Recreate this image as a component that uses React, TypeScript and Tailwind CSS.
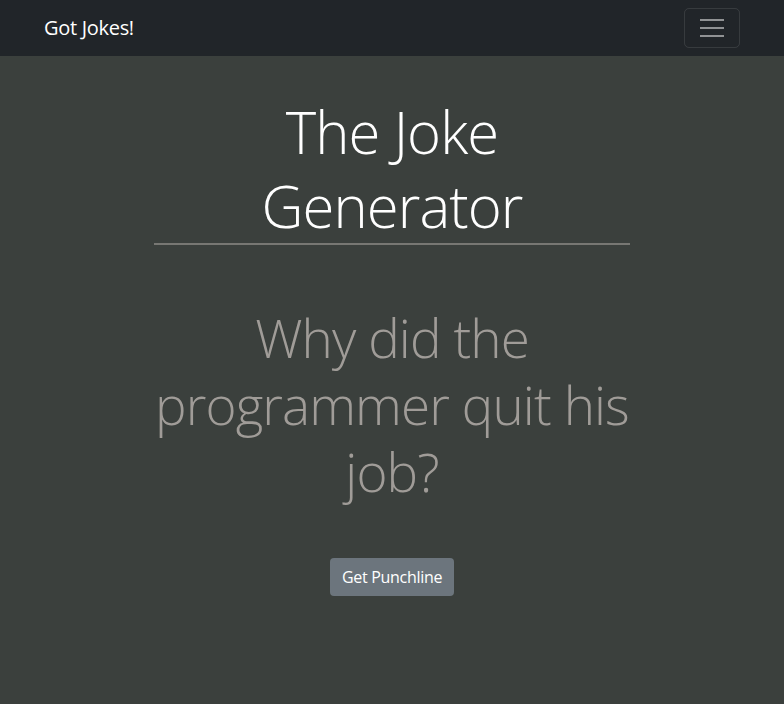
import React from "react";

const light = { fontFamily: '"Open Sans", "Noto Sans", sans-serif' };

export default function App() {
  return (
    <div className="min-h-[704px] bg-[#3b403d]" style={light}>
      <nav className="h-14 bg-[#212529] flex items-center justify-between pl-[44px] pr-[44px]">
        <span className="text-white text-[20px] leading-none tracking-[-0.3px]">Got Jokes!</span>
        <button className="w-14 h-10 rounded-[5px] border border-white/10 flex flex-col items-center justify-center gap-[6px]">
          <span className="block w-6 h-[2px] bg-white/50" />
          <span className="block w-6 h-[2px] bg-white/50" />
          <span className="block w-6 h-[2px] bg-white/50" />
        </button>
      </nav>
      <main className="flex flex-col items-center">
        <div className="w-[476px] mt-[39px]">
          <h1 className="text-center text-white font-light text-[58px] leading-[74px] tracking-[-0.9px]">
            The Joke Generator
          </h1>
          <hr className="border-0 h-[2px] bg-[#777773]" />
        </div>
        <p className="w-[500px] mt-[59px] text-center text-[#a09c98] font-light text-[53px] leading-[67px] tracking-[-0.9px]">
          Why did the programmer quit his job?
        </p>
        <button className="mt-[53px] h-[38px] px-3 rounded-[4px] bg-[#6c757d] text-white text-[16px] tracking-[-0.3px]">
          Get Punchline
        </button>
      </main>
    </div>
  );
}
